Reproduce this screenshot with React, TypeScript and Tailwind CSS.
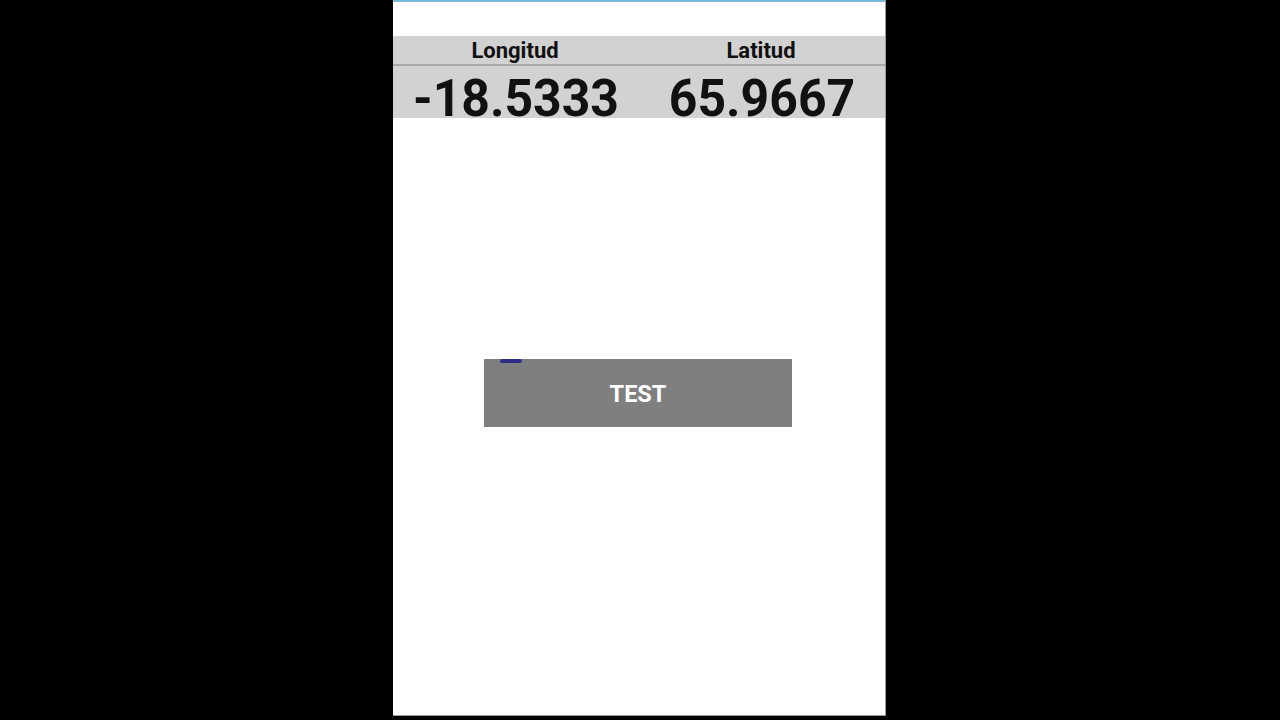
const font = { fontFamily: 'Roboto, "Liberation Sans", sans-serif' };

export default function App() {
  return (
    <div className="w-[1280px] h-[720px] bg-black overflow-hidden" style={font}>
      <div className="ml-[393px] w-[493px] h-[716px] bg-white border-r border-b border-[#9a9a9a] flex flex-col">
        <div className="h-[2px] bg-[#7ab8d8]" />
        <div className="h-[34px]" />
        <div className="bg-[#d2d2d2]">
          <div className="grid grid-cols-2 h-[28px] items-center">
            <div className="text-center text-[22px] font-bold text-[#111] leading-none -translate-x-[1px] translate-y-[1px]">Longitud</div>
            <div className="text-center text-[22px] font-bold text-[#111] leading-none -translate-x-[1px] translate-y-[1px]">Latitud</div>
          </div>
          <div className="h-[2px] bg-[#a8a8a8]" />
          <div className="grid grid-cols-2 pt-[14px]">
            <div className="text-center text-[52px] font-bold text-[#111] leading-[38px] scale-x-[0.96]">-18.5333</div>
            <div className="text-center text-[52px] font-bold text-[#111] leading-[38px] scale-x-[0.96]">65.9667</div>
          </div>
        </div>
        <div className="flex justify-center mt-[241px]">
          <button className="relative w-[308px] h-[68px] bg-[#7f7f7f] text-white text-[23.5px] font-bold -translate-x-[1px]">
            <span className="absolute left-[16px] top-[0px] w-[22px] h-[4px] rounded-full bg-[#1a1a8a] opacity-80 blur-[0.5px]" />
            <span className="relative top-[2px]">TEST</span>
          </button>
        </div>
      </div>
    </div>
  );
}
